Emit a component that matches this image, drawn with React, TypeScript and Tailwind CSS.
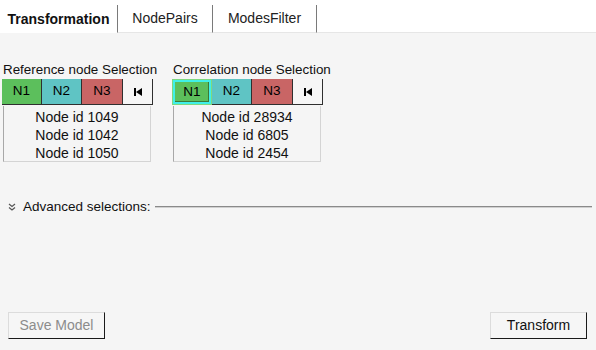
// Transformation panel - tabbed layout with node selection groups

const font = { fontFamily: '"Liberation Sans", Arial, sans-serif' };

function PlayFirstIcon() {
  return (
    <svg width="8" height="8" viewBox="0 0 8 8" className="block">
      <rect x="0" y="0" width="2" height="8" fill="#000" />
      <polygon points="8,0 8,8 2,4" fill="#000" />
    </svg>
  );
}

function NodeSelection({
  title,
  nodes,
  highlightFirst,
}: {
  title: string;
  nodes: string[];
  highlightFirst?: boolean;
}) {
  return (
    <div className="flex flex-col w-[151px] shrink-0">
      <div className="text-[13.4px] leading-[14px] text-[#111] pl-[1px] mb-[2px] whitespace-nowrap">{title}</div>
      <div className="flex h-[26px]">
        <button
          className={
            highlightFirst
              ? 'w-[40px] h-[26px] bg-[#5cbf5c] text-[13.5px] text-black border-[3px] border-[#3ff0e8] outline outline-1 outline-[#7fd87f] -outline-offset-1 shadow-[inset_-1px_-1px_0_#3a7a3a]'
              : 'w-[40px] h-[26px] bg-[#5cbf5c] text-[13.5px] text-black border-r border-b border-[#2f2f2f]'
          }
        >
          N1
        </button>
        <button className="w-[40px] h-[26px] bg-[#5fc4c4] text-[13.5px] text-black border-r border-b border-[#2f2f2f]">
          N2
        </button>
        <button className="w-[41px] h-[26px] bg-[#c96565] text-[13.5px] text-black border-r border-b border-[#2f2f2f]">
          N3
        </button>
        <button className="w-[30px] h-[26px] bg-[#f6f6f6] flex items-center justify-center border-r border-b border-[#2f2f2f]">
          <PlayFirstIcon />
        </button>
      </div>
      <div className="ml-[1px] w-[148px] h-[56px] border border-t-0 border-[#d4d4d4] border-l-[#a8a8a8] flex flex-col items-center pt-[2px] mt-[1px]">
        {nodes.map((n) => (
          <div key={n} className="h-[18px] leading-[18px] text-[14px] text-[#111]">
            {n}
          </div>
        ))}
      </div>
    </div>
  );
}

export default function App() {
  return (
    <div className="w-[596px] h-[350px] bg-[#f5f5f5] flex flex-col overflow-hidden" style={font}>
      {/* Tab bar */}
      <div className="flex h-[33px] bg-white">
        <div className="w-[117px] h-[33px] flex items-center justify-center pt-[6px] text-[14px] font-bold text-[#111] bg-white">
          Transformation
        </div>
        <div className="w-[96px] h-[33px] pt-[5px] flex">
          <div className="w-full border-l border-r border-b border-[#7a7a7a] border-b-[#e6e6e6] border-l-[#7a7a7a] flex items-center justify-center text-[14px] text-[#222] bg-white">
            NodePairs
          </div>
        </div>
        <div className="w-[104px] h-[33px] pt-[5px] flex">
          <div className="w-full border-r border-b border-[#7a7a7a] border-b-[#e6e6e6] flex items-center justify-center text-[14px] text-[#222] bg-white">
            ModesFilter
          </div>
        </div>
        <div className="flex-1 border-b border-[#e6e6e6]" />
      </div>

      {/* Content */}
      <div className="flex-1 flex flex-col bg-[#f5f5f5]">
        <div className="flex gap-[19px] pl-[2px] pt-[30px]">
          <NodeSelection title="Reference node Selection" nodes={['Node id 1049', 'Node id 1042', 'Node id 1050']} />
          <NodeSelection
            title="Correlation node Selection"
            nodes={['Node id 28934', 'Node id 6805', 'Node id 2454']}
            highlightFirst
          />
        </div>

        <div className="flex items-center mt-[37px] pl-[8px] pr-[4px] h-[16px]">
          <svg width="8" height="8" viewBox="0 0 8 8" className="mr-[7px]">
            <polyline points="1,1 4,3.5 7,1" fill="none" stroke="#555" strokeWidth="1.2" />
            <polyline points="1,4.5 4,7 7,4.5" fill="none" stroke="#555" strokeWidth="1.2" />
          </svg>
          <span className="text-[13.5px] text-[#111] whitespace-nowrap">Advanced selections:</span>
          <div className="flex-1 ml-[4px] border-t border-t-[#8a8a8a] border-b border-b-[#d0d0d0]" />
        </div>

        <div className="flex-1" />

        <div className="flex justify-between pl-[8px] pr-[9px] pb-[11px]">
          <button className="w-[97px] h-[27px] bg-[#f6f6f6] text-[14px] text-[#8c8c8c] border border-[#dcdcdc] border-r-[#1a1a1a] border-b-[#1a1a1a]">
            Save Model
          </button>
          <button className="w-[97px] h-[27px] bg-[#f6f6f6] text-[14px] text-[#111] border border-[#dcdcdc] border-r-[#1a1a1a] border-b-[#1a1a1a]">
            Transform
          </button>
        </div>
      </div>
    </div>
  );
}
